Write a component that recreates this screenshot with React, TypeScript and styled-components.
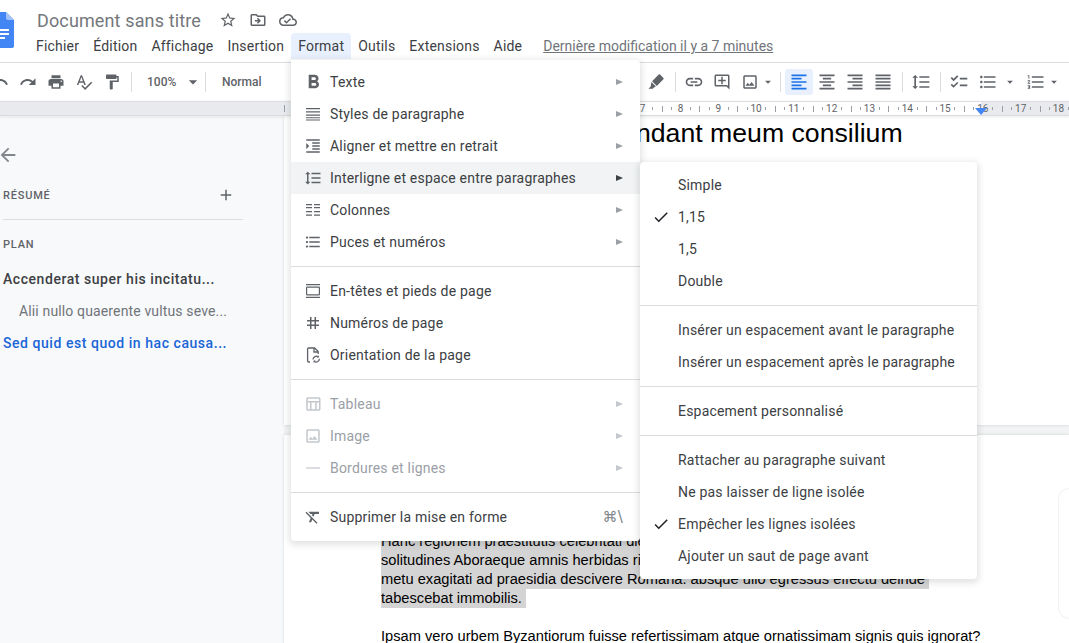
import styled, { createGlobalStyle } from "styled-components";
import type { ReactNode } from "react";
import {
  MdAdd,
  MdArrowBack,
  MdArrowDropDown,
  MdCheck,
  MdChecklist,
  MdFormatAlignCenter,
  MdFormatAlignJustify,
  MdFormatAlignLeft,
  MdFormatAlignRight,
  MdFormatBold,
  MdFormatClear,
  MdFormatIndentIncrease,
  MdFormatLineSpacing,
  MdFormatListBulleted,
  MdFormatListNumbered,
  MdFormatPaint,
  MdLink,
  MdOutlineAddComment,
  MdOutlineCloudDone,
  MdOutlineDriveFileMove,
  MdOutlineImage,
  MdOutlineStarBorder,
  MdOutlineTableChart,
  MdPrint,
  MdRedo,
  MdSpellcheck,
  MdTag,
  MdUndo,
} from "react-icons/md";

const GlobalStyle = createGlobalStyle`
  *,
  *::before,
  *::after {
    box-sizing: border-box;
  }

  html, body {
    height: 100%;
    margin: 0;
    overflow: hidden;
  }

  body {
    font-family: Roboto, "Liberation Sans", sans-serif;
    background: #fff;
  }
`;

const StylesIcon = () => (
  <svg width="18" height="18" viewBox="0 0 18 18" fill="currentColor">
    <path d="M2 3h14v1.2H2zM2 6.3h14v1.2H2zM2 9.6h14v1.2H2zM2 12.2h14v1H2zM2 14.6h14v1H2z" />
  </svg>
);

const ColumnsIcon = () => (
  <svg width="18" height="18" viewBox="0 0 18 18" fill="currentColor">
    <path d="M2 3h6v1.2H2zM10 3h6v1.2H10zM2 6h6v1.2H2zM10 6h6v1.2H10zM2 10h6v1.2H2zM10 10h6v1.2H10zM2 13.5h6v1.2H2zM10 13.5h6v1.2H10z" />
  </svg>
);

const HeaderFooterIcon = () => (
  <svg width="18" height="18" viewBox="0 0 18 18" fill="none" stroke="currentColor" strokeWidth="1.2">
    <path d="M2 2.6h14M2 15.4h14" />
    <rect x="2.6" y="5.1" width="12.8" height="7.8" rx="0.6" />
  </svg>
);

const OrientationIcon = () => (
  <svg width="18" height="18" viewBox="0 0 18 18" fill="none" stroke="currentColor" strokeWidth="1.3">
    <path d="M6 16H4.6a1 1 0 0 1-1-1V3a1 1 0 0 1 1-1h6l3.6 3.6V8" />
    <path d="M10 2v4h4" />
    <path d="M9 13.5a3.4 3.4 0 0 1 5.4-2.6M15.4 12.8a3.4 3.4 0 0 1-5.4 2.6" />
    <path d="M14.8 9.2v2.4h-2.2M9.6 16.8v-2.2h2.2" fill="currentColor" stroke="none" />
  </svg>
);

const DashIcon = () => (
  <svg width="18" height="18" viewBox="0 0 18 18" fill="currentColor">
    <path d="M2 8.4h14v1.2H2z" />
  </svg>
);

const HighlighterIcon = () => (
  <svg width="18" height="18" viewBox="0 0 18 18" fill="currentColor">
    <path d="M11.7 1.6a1 1 0 0 1 1.4 0l3.3 3.3a1 1 0 0 1 0 1.4l-6.6 6.6-4.7-4.7zM4.4 9.1l4.5 4.5-2 1-1.1 1.2H1.4l2.3-2.4z" />
  </svg>
);

const DocsLogo = () => (
  <LogoSvg width="24" height="36" viewBox="0 0 24 36">
    <path d="M2 0h14l8 8v26a2 2 0 0 1-2 2H2a2 2 0 0 1-2-2V2a2 2 0 0 1 2-2z" fill="#4285f4" />
    <path d="M16 0l8 8h-6a2 2 0 0 1-2-2z" fill="#a1c2fa" />
    <path d="M5 17h14v2H5zM5 21h14v2H5zM5 25h10v2H5z" fill="#fff" />
  </LogoSvg>
);

type RowProps = {
  icon?: ReactNode;
  label: string;
  arrow?: boolean;
  active?: boolean;
  disabled?: boolean;
  shortcut?: string;
};

const MenuRow = ({ icon, label, arrow, active, disabled, shortcut }: RowProps) => (
  <Row $active={active} $disabled={disabled}>
    <RowIcon $disabled={disabled}>{icon}</RowIcon>
    <RowLabel>{label}</RowLabel>
    {shortcut && <Shortcut>{shortcut}</Shortcut>}
    {arrow && <Arrow $active={active} $disabled={disabled} />}
  </Row>
);

const SubRow = ({ label, checked }: { label: string; checked?: boolean }) => (
  <SubItem>
    <CheckSlot>{checked && <MdCheck size={18} />}</CheckSlot>
    <RowLabel>{label}</RowLabel>
  </SubItem>
);

const menuLabels = ["Fichier", "Édition", "Affichage", "Insertion", "Format", "Outils", "Extensions", "Aide"];
const rulerMarks = Array.from({ length: 18 }, (_, i) => i + 1);

export default function App() {
  return (
    <>
      <GlobalStyle />
      <Screen>
        <Header>
          <DocsLogo />
          <TitleColumn>
            <TitleRow>
              <DocTitle>Document sans titre</DocTitle>
              <TitleIcons>
                <MdOutlineStarBorder size={18} />
                <MdOutlineDriveFileMove size={18} />
                <MdOutlineCloudDone size={18} />
              </TitleIcons>
            </TitleRow>
            <MenuBar>
              {menuLabels.map((label) => (
                <MenuLabel key={label} $open={label === "Format"}>
                  {label}
                </MenuLabel>
              ))}
              <LastEdit>Dernière modification il y a 7 minutes</LastEdit>
            </MenuBar>
          </TitleColumn>
        </Header>

        <Toolbar>
          <ToolGroup $bleed>
            <ToolButton><MdUndo size={18} /></ToolButton>
            <ToolButton><MdRedo size={18} /></ToolButton>
            <ToolButton><MdPrint size={18} /></ToolButton>
            <ToolButton><MdSpellcheck size={18} /></ToolButton>
            <ToolButton><MdFormatPaint size={18} /></ToolButton>
            <ToolSep />
            <ZoomSelect>
              <span>100%</span>
              <MdArrowDropDown size={20} />
            </ZoomSelect>
            <ToolSep />
            <StyleSelect>Normal</StyleSelect>
          </ToolGroup>
          <ToolGroup>
            <ToolButton><HighlighterIcon /></ToolButton>
            <ToolSep />
            <ToolButton><MdLink size={20} /></ToolButton>
            <ToolButton><MdOutlineAddComment size={18} /></ToolButton>
            <ToolButton><MdOutlineImage size={18} /></ToolButton>
            <Caret $shift={-3}><MdArrowDropDown size={20} /></Caret>
            <ToolSep />
            <ToolButton $active><MdFormatAlignLeft size={20} /></ToolButton>
            <ToolButton><MdFormatAlignCenter size={20} /></ToolButton>
            <ToolButton><MdFormatAlignRight size={20} /></ToolButton>
            <ToolButton><MdFormatAlignJustify size={20} /></ToolButton>
            <ToolSep />
            <ToolButton><MdFormatLineSpacing size={20} /></ToolButton>
            <ToolSep />
            <ToolButton><MdChecklist size={20} /></ToolButton>
            <ListGroup>
              <ToolButton><MdFormatListBulleted size={20} /></ToolButton>
              <Caret $shift={1}><MdArrowDropDown size={20} /></Caret>
            </ListGroup>
            <ListGroup $wide>
              <ToolButton><MdFormatListNumbered size={20} /></ToolButton>
              <Caret $shift={-3}><MdArrowDropDown size={20} /></Caret>
            </ListGroup>
          </ToolGroup>
        </Toolbar>

        <Ruler>
          {rulerMarks.map((n) => (
            <RulerCell key={n}>{n}</RulerCell>
          ))}
          <SidebarMark />
          <IndentMark />
        </Ruler>

        <Workspace>
          <Sidebar>
            <BackIcon><MdArrowBack size={22} /></BackIcon>
            <SideHeading>
              <SideTitle>RÉSUMÉ</SideTitle>
              <MdAdd size={18} />
            </SideHeading>
            <SideRule />
            <PlanTitle>PLAN</PlanTitle>
            <OutlineItem>Accenderat super his incitatu...</OutlineItem>
            <OutlineItem $level={2}>Alii nullo quaerente vultus seve...</OutlineItem>
            <OutlineItem $current>Sed quid est quod in hac causa...</OutlineItem>
          </Sidebar>

          <DocArea>
            <PageOne>
              <Heading>in hac causa defendant meum consilium</Heading>
            </PageOne>
            <PageTwo>
              <Paragraph>
                <Selected>
                  Hanc regionem praestitutis celebritati diebus invadere parans dux ante edictus per
                  solitudines Aboraeque amnis herbidas ripas, suorum indicio proditus, qui admissi
                  flagitii metu exagitati ad praesidia descivere Romana. absque ullo egressus effectu
                  deinde{"\u00a0"} tabescebat immobilis.{"\u00a0"}
                </Selected>
              </Paragraph>
              <Paragraph>
                Ipsam vero urbem Byzantiorum fuisse refertissimam atque ornatissimam signis quis ignorat?
              </Paragraph>
              <SideWidget />
            </PageTwo>
          </DocArea>
        </Workspace>

        <FormatMenu>
          <MenuRow icon={<MdFormatBold size={23} />} label="Texte" arrow />
          <MenuRow icon={<StylesIcon />} label="Styles de paragraphe" arrow />
          <MenuRow icon={<MdFormatIndentIncrease size={18} />} label="Aligner et mettre en retrait" arrow />
          <MenuRow icon={<MdFormatLineSpacing size={18} />} label="Interligne et espace entre paragraphes" arrow active />
          <MenuRow icon={<ColumnsIcon />} label="Colonnes" arrow />
          <MenuRow icon={<MdFormatListBulleted size={18} />} label="Puces et numéros" arrow />
          <Divider />
          <MenuRow icon={<HeaderFooterIcon />} label="En-têtes et pieds de page" />
          <MenuRow icon={<MdTag size={18} />} label="Numéros de page" />
          <MenuRow icon={<OrientationIcon />} label="Orientation de la page" />
          <Divider />
          <MenuRow icon={<MdOutlineTableChart size={18} />} label="Tableau" arrow disabled />
          <MenuRow icon={<MdOutlineImage size={18} />} label="Image" arrow disabled />
          <MenuRow icon={<DashIcon />} label="Bordures et lignes" arrow disabled />
          <Divider />
          <MenuRow icon={<MdFormatClear size={18} />} label="Supprimer la mise en forme" shortcut="⌘\" />
        </FormatMenu>

        <SpacingMenu>
          <SubRow label="Simple" />
          <SubRow label="1,15" checked />
          <SubRow label="1,5" />
          <SubRow label="Double" />
          <Divider />
          <SubRow label="Insérer un espacement avant le paragraphe" />
          <SubRow label="Insérer un espacement après le paragraphe" />
          <Divider />
          <SubRow label="Espacement personnalisé" />
          <Divider />
          <SubRow label="Rattacher au paragraphe suivant" />
          <SubRow label="Ne pas laisser de ligne isolée" />
          <SubRow label="Empêcher les lignes isolées" checked />
          <SubRow label="Ajouter un saut de page avant" />
        </SpacingMenu>
      </Screen>
    </>
  );
}

const Screen = styled.div`
  position: relative;
  display: flex;
  flex-direction: column;
  height: 100vh;
  overflow: hidden;
`;

const Header = styled.header`
  display: flex;
  align-items: flex-start;
  height: 63px;
  border-bottom: 1px solid #dadce0;
`;

const LogoSvg = styled.svg`
  flex: none;
  margin: 12px 0 0 -10px;
`;

const TitleColumn = styled.div`
  display: flex;
  flex-direction: column;
  margin-left: 15px;
  padding-top: 7px;
`;

const TitleRow = styled.div`
  display: flex;
  align-items: center;
  height: 26px;
  padding-left: 8px;
`;

const DocTitle = styled.div`
  font-size: 18px;
  letter-spacing: 0.13px;
  color: #74777b;
  width: 182px;
  white-space: nowrap;
`;

const TitleIcons = styled.div`
  display: flex;
  align-items: center;
  gap: 12px;
  color: #5f6368;
`;

const MenuBar = styled.nav`
  display: flex;
  align-items: center;
  height: 26px;
`;

const MenuLabel = styled.div<{ $open?: boolean }>`
  display: flex;
  align-items: center;
  height: 26px;
  padding: 0 7px;
  font-size: 14px;
  letter-spacing: 0.2px;
  color: #3c4043;
  border-radius: 4px 4px 0 0;
  background: ${(p) => (p.$open ? "#e8f0fe" : "transparent")};
  white-space: nowrap;
`;

const LastEdit = styled.div`
  margin-left: 14px;
  font-size: 14px;
  color: #70757a;
  text-decoration: underline;
  white-space: nowrap;
`;

const Toolbar = styled.div`
  display: flex;
  align-items: center;
  justify-content: space-between;
  height: 38px;
  padding-right: 8px;
`;

const ToolGroup = styled.div<{ $bleed?: boolean }>`
  display: flex;
  align-items: center;
  margin-left: ${(p) => (p.$bleed ? "-14px" : "0")};
`;

const ToolButton = styled.div<{ $active?: boolean }>`
  flex: none;
  display: flex;
  align-items: center;
  justify-content: center;
  width: 28px;
  height: 26px;
  border-radius: 3px;
  color: ${(p) => (p.$active ? "#1a73e8" : "#5f6368")};
  background: ${(p) => (p.$active ? "#e8f0fe" : "transparent")};
`;

const ToolSep = styled.div`
  flex: none;
  width: 1px;
  height: 20px;
  margin: 0 4.5px;
  background: #dadce0;
`;

const ZoomSelect = styled.div`
  display: flex;
  align-items: center;
  justify-content: space-between;
  width: 64px;
  padding-left: 11px;
  font-size: 12px;
  font-weight: 500;
  color: #5f6368;

  svg {
    flex: none;
    margin-right: -3px;
  }
`;

const StyleSelect = styled.div`
  margin-left: 12px;
  width: 120px;
  font-size: 12px;
  font-weight: 500;
  color: #5f6368;
`;

const Caret = styled.div<{ $shift: number }>`
  flex: none;
  display: flex;
  align-items: center;
  justify-content: center;
  width: 14px;
  color: #5f6368;
  margin-left: ${(p) => p.$shift}px;
`;

const ListGroup = styled.div<{ $wide?: boolean }>`
  display: flex;
  align-items: center;
  margin-left: ${(p) => (p.$wide ? "5px" : "1px")};
`;

const Ruler = styled.div`
  position: relative;
  z-index: 1;
  display: flex;
  height: 15px;
  padding-left: 397px;
  border-top: 1px solid #dadce0;
  border-bottom: 1px solid #dadce0;
  background: linear-gradient(to right, #e8eaed 378px, #fff 378px, #fff 981px, #e8eaed 981px);
  box-shadow: 0 1px 3px rgba(60, 64, 67, 0.12);
`;

const RulerCell = styled.div`
  flex: none;
  width: 37.8px;
  text-align: center;
  font-size: 10px;
  line-height: 13px;
  color: #5f6368;
  background:
    linear-gradient(#9aa0a6, #9aa0a6) 0 center / 1px 6px no-repeat,
    linear-gradient(#9aa0a6, #9aa0a6) 9.4px center / 1px 3px no-repeat,
    linear-gradient(#9aa0a6, #9aa0a6) 28.3px center / 1px 3px no-repeat;
`;

const SidebarMark = styled.div`
  position: absolute;
  left: 284px;
  top: 3px;
  width: 1px;
  height: 7px;
  background: #9aa0a6;
`;

const IndentMark = styled.div`
  position: absolute;
  left: 975px;
  top: 6px;
  width: 0;
  height: 0;
  border-left: 6px solid transparent;
  border-right: 6px solid transparent;
  border-top: 7px solid #4285f4;
`;

const Workspace = styled.main`
  flex: 1;
  display: flex;
  min-height: 0;
`;

const Sidebar = styled.aside`
  flex: none;
  width: 284px;
  padding: 28px 0 0 3px;
  background: #f8f9fb;
  color: #5f6368;
`;

const BackIcon = styled.div`
  display: flex;
  height: 22px;
  margin-left: -6.5px;
  color: #80868b;
`;

const SideHeading = styled.div`
  display: flex;
  align-items: center;
  justify-content: space-between;
  width: 232px;
  height: 18px;
  margin-top: 20px;
`;

const SideTitle = styled.div`
  font-size: 11px;
  font-weight: 500;
  letter-spacing: 0.8px;
`;

const SideRule = styled.div`
  width: 240px;
  height: 1px;
  margin-top: 15px;
  background: #dadce0;
`;

const PlanTitle = styled(SideTitle)`
  margin-top: 18px;
  line-height: 13px;
  margin-bottom: 12px;
`;

const OutlineItem = styled.div<{ $level?: number; $current?: boolean }>`
  display: flex;
  align-items: center;
  height: 32px;
  padding-left: ${(p) => (p.$level === 2 ? "16px" : "0")};
  font-size: 14px;
  letter-spacing: ${(p) => (p.$level === 2 ? "0.14px" : "0.55px")};
  font-weight: ${(p) => (p.$level === 2 ? 400 : 500)};
  color: ${(p) => (p.$current ? "#1a66d6" : p.$level === 2 ? "#70757a" : "#3c4043")};
  white-space: nowrap;
`;

const DocArea = styled.div`
  flex: 1;
  display: flex;
  flex-direction: column;
  min-width: 0;
  background: #f1f3f4;
`;

const PageOne = styled.section`
  flex: none;
  height: 309px;
  padding: 1px 0 0 143px;
  background: #fff;
  box-shadow: 0 0 3px rgba(60, 64, 67, 0.18);
`;

const Heading = styled.h1`
  margin: 0;
  font-family: "Liberation Sans", Arial, sans-serif;
  font-size: 26.67px;
  font-weight: 400;
  line-height: 32px;
  color: #000;
  white-space: nowrap;
`;

const PageTwo = styled.section`
  position: relative;
  flex: 1;
  margin-top: 10px;
  padding: 97px 0 0 97px;
  background: #fff;
  box-shadow: 0 0 3px rgba(60, 64, 67, 0.18);
`;

const Paragraph = styled.p`
  width: 600px;
  margin: 0 0 19px;
  font-family: "Liberation Sans", Arial, sans-serif;
  font-size: 14.67px;
  line-height: 19px;
  color: #000;
`;

const Selected = styled.span`
  background: #d4d4d4;
  padding: 2px 0;
`;

const SideWidget = styled.div`
  position: absolute;
  right: 0;
  top: 53px;
  width: 11px;
  height: 131px;
  border: 1px solid #f1f3f4;
  border-right: 0;
  border-radius: 12px 0 0 12px;
`;

const FloatingMenu = styled.div`
  position: absolute;
  z-index: 5;
  background: #fff;
  border-radius: 4px;
  box-shadow: 0 2px 6px 2px rgba(60, 64, 67, 0.15);
`;

const FormatMenu = styled(FloatingMenu)`
  left: 291px;
  top: 60px;
  width: 349px;
  padding: 6px 0 8px;
  border-top-left-radius: 0;
`;

const SpacingMenu = styled(FloatingMenu)`
  left: 640px;
  top: 162px;
  width: 337px;
  padding: 7px 0;
`;

const Row = styled.div<{ $active?: boolean; $disabled?: boolean }>`
  display: flex;
  align-items: center;
  height: 32px;
  padding: 0 17px 0 13px;
  font-size: 14px;
  letter-spacing: 0.2px;
  color: ${(p) => (p.$disabled ? "#9aa0a6" : "#3c4043")};
  background: ${(p) => (p.$active ? "#f1f3f4" : "transparent")};
`;

const RowIcon = styled.div<{ $disabled?: boolean }>`
  flex: none;
  display: flex;
  align-items: center;
  justify-content: center;
  width: 18px;
  height: 18px;
  margin-right: 8px;
  color: ${(p) => (p.$disabled ? "#c4c7cb" : "#5f6368")};

  svg {
    flex: none;
  }
`;

const RowLabel = styled.span`
  flex: 1;
  white-space: nowrap;
`;

const Shortcut = styled.span`
  color: #80868b;
  font-size: 15px;
  font-family: "DejaVu Sans", Roboto, sans-serif;
`;

const Arrow = styled.span<{ $active?: boolean; $disabled?: boolean }>`
  width: 0;
  height: 0;
  border-top: 3px solid transparent;
  border-bottom: 3px solid transparent;
  border-left: 7px solid ${(p) => (p.$active ? "#3c4043" : p.$disabled ? "#c4c7cb" : "#9aa0a6")};
`;

const SubItem = styled.div`
  display: flex;
  align-items: center;
  height: 32px;
  padding-left: 12px;
  font-size: 14px;
  letter-spacing: 0.2px;
  color: #3c4043;
`;

const CheckSlot = styled.div`
  flex: none;
  display: flex;
  width: 18px;
  height: 18px;
  margin-right: 8px;
  color: #202124;
`;

const Divider = styled.div`
  height: 1px;
  margin: 8px 0;
  background: #dadce0;
`;
